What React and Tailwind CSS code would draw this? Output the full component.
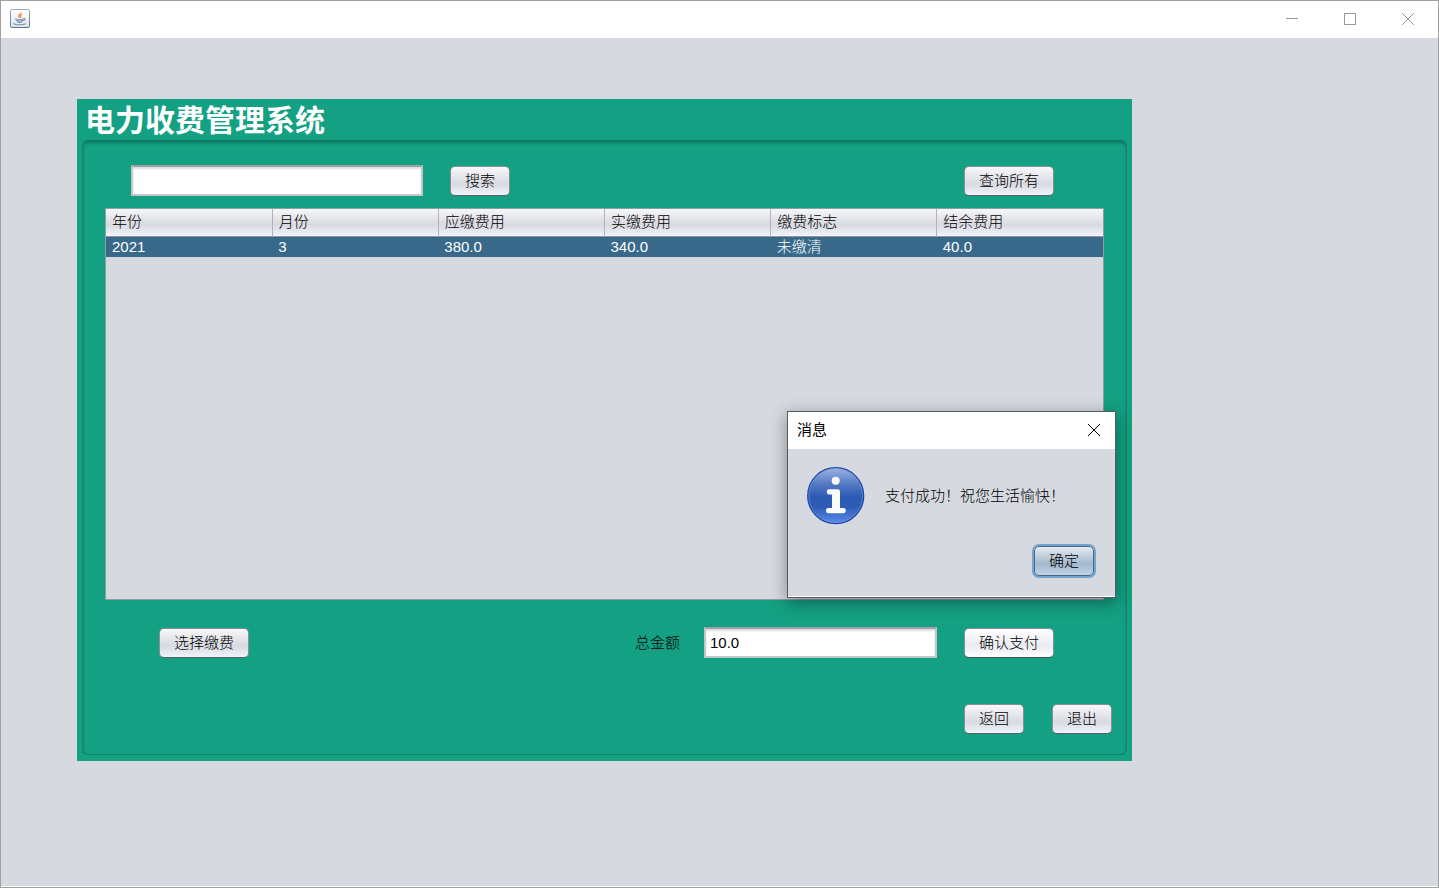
import React, { useState } from 'react';

const COLUMNS = ['年份', '月份', '应缴费用', '实缴费用', '缴费标志', '结余费用'];

const BILLS = [
    { id: 1, cells: ['2021', '3', '380.0', '340.0', '未缴清', '40.0'] },
];

const FONT = "font-['Liberation_Sans','Noto_Sans_CJK_SC',sans-serif]";

const BUTTON_STYLES = {
    normal: 'border-[#8b8f95] border-b-[#5c6066] bg-linear-to-b from-[#f8f8fa] via-[#d8dae1] via-60% to-[#f0f3fb]',
    bright: 'border-[#8b8f95] border-b-[#4a4e54] bg-linear-to-b from-white via-[#e9ebf1] via-60% to-white',
    focused: 'border-[#4a6784] bg-linear-to-b from-[#e6ebf0] via-[#a3b8cc] via-60% to-[#c0d4e8] shadow-[0_0_0_2px_#73a4d1]',
};

function NimbusButton({ children, variant = 'normal', className = '', onClick }) {
    return (
        <button
            type="button"
            onClick={onClick}
            className={`h-[30px] shrink-0 rounded-[5px] border text-center text-[15px] leading-5 font-light text-black ${BUTTON_STYLES[variant]} ${className}`}
        >
            {children}
        </button>
    );
}

function NimbusInput({ className = '', ...props }) {
    return (
        <input
            type="text"
            className={`h-[31px] border-2 border-[#c2c5ca] border-t-[#9da0a5] bg-white px-1 text-[15px] text-black shadow-[inset_0_2px_2px_#dddddd] outline-none ${className}`}
            {...props}
        />
    );
}

function JavaIcon() {
    return (
        <svg width="20" height="20" viewBox="0 0 20 20" aria-hidden="true">
            <defs>
                <linearGradient id="javaTile" x1="0" y1="0" x2="0" y2="1">
                    <stop offset="0" stopColor="#ffffff" />
                    <stop offset="1" stopColor="#dfe3e7" />
                </linearGradient>
                <linearGradient id="javaBorder" x1="0" y1="0" x2="0" y2="1">
                    <stop offset="0" stopColor="#9aa9b7" />
                    <stop offset="1" stopColor="#587894" />
                </linearGradient>
            </defs>
            <rect x="0.5" y="0.5" width="19" height="18" rx="1.5" fill="url(#javaTile)" stroke="url(#javaBorder)" />
            <path d="M10.800 3.500c.700 1.600-2.600 2.300-2.200 3.800.2.700.9 1 1 1.700M12 5.500c-2 .9-2.200 1.300-1.300 2.200.3.400.1.800-.3 1.100" fill="none" stroke="#ec914e" strokeWidth="1.300" />
            <path d="M5 9.800c2 .9 6.500.9 8.800 0M6 11.300c2 .8 5 .8 7 0M7 12.800c1.600.7 3.800.7 5.300 0M13.500 9.500c2.200-.4 2 1.800-.5 2.200M4.500 14c-1.800.8 1 1.700 5 1.700s6.800-.7 5.800-1.500" fill="none" stroke="#7893ac" strokeWidth="1.100" />
        </svg>
    );
}

function InfoIcon() {
    return (
        <svg width="58" height="58" viewBox="0 0 58 58" className="shrink-0" aria-hidden="true">
            <defs>
                <linearGradient id="infoFill" x1="0" y1="0" x2="0" y2="1">
                    <stop offset="0" stopColor="#9db4e4" />
                    <stop offset="0.3" stopColor="#5279c2" />
                    <stop offset="0.52" stopColor="#2d5bb4" />
                    <stop offset="0.7" stopColor="#2d5bb4" />
                    <stop offset="1" stopColor="#5b8bec" />
                </linearGradient>
            </defs>
            <circle cx="28.700" cy="28.700" r="28" fill="url(#infoFill)" stroke="#2148a0" strokeWidth="1.200" />
            <circle cx="28.700" cy="28.700" r="26.800" fill="none" stroke="#7d9fe3" strokeOpacity="0.45" />
            <circle cx="28.700" cy="13.800" r="4" fill="#fafafa" />
            <path d="M22 22.200h8.500c1.700 0 2.500.8 2.500 2.500V41h3.500c1.500 0 2.300 1.100 2.300 2.600s-.8 2.700-2.300 2.700H21.300c-1.500 0-2.300-1.200-2.300-2.700s.8-2.600 2.300-2.600H25V27.400h-3c-1.400 0-2.200-1.200-2.200-2.600s.8-2.600 2.200-2.600z" fill="#fafafa" />
        </svg>
    );
}

function TitleBar() {
    return (
        <header className="flex h-[37px] shrink-0 items-center justify-between bg-white pr-6 pb-px pl-[9px]">
            <JavaIcon />
            <div className="flex items-center gap-[46px] text-[#999999]">
                <button type="button" aria-label="最小化">
                    <svg width="12" height="12" viewBox="0 0 12 12" className="block">
                        <path d="M0 5.5h12" stroke="currentColor" />
                    </svg>
                </button>
                <button type="button" aria-label="最大化">
                    <svg width="12" height="12" viewBox="0 0 12 12" className="block">
                        <rect x="0.5" y="0.5" width="11" height="11" fill="none" stroke="currentColor" />
                    </svg>
                </button>
                <button type="button" aria-label="关闭">
                    <svg width="12" height="12" viewBox="0 0 12 12" className="block">
                        <path d="M0 0l12 12M12 0L0 12" stroke="currentColor" />
                    </svg>
                </button>
            </div>
        </header>
    );
}

function BillTable() {
    return (
        <div className="mx-[22px] mt-3 min-h-[392px] border border-[#8f9ea3] bg-[#d6d9e0]">
            <table className="w-full table-fixed border-collapse text-left text-[15px] leading-5">
                <thead>
                    <tr className="h-[27px] border-b border-[#8f9399] bg-linear-to-b from-[#f7f7f9] via-[#d8dae1] via-60% to-[#eef1f9]">
                        {COLUMNS.map(name => (
                            <th key={name} scope="col" className="border-r border-[#b0b3b9] px-1.5 py-0 font-light text-black last:border-r-0">
                                {name}
                            </th>
                        ))}
                    </tr>
                </thead>
                <tbody>
                    {BILLS.map(bill => (
                        <tr key={bill.id} className="h-5 bg-[#39698a] font-light text-white">
                            {bill.cells.map((cell, i) => (
                                <td key={COLUMNS[i]} className="px-1.5 py-0">{cell}</td>
                            ))}
                        </tr>
                    ))}
                </tbody>
            </table>
        </div>
    );
}

function MessageDialog({ onClose }) {
    return (
        <div
            role="dialog"
            aria-labelledby="dialog-title"
            className="absolute top-[312px] right-4 w-[329px] border border-[#565b60] bg-[#d6d9e0] shadow-[0_4px_16px_rgba(0,0,0,0.4)]"
        >
            <div className="flex h-[37px] items-center justify-between bg-white pr-[14px] pb-px pl-[9px]">
                <h2 id="dialog-title" className="text-[15px] leading-5 text-black">消息</h2>
                <button type="button" aria-label="关闭" onClick={onClose}>
                    <svg width="14" height="14" viewBox="0 0 14 14" className="block">
                        <path d="M1 1l12 12M13 1L1 13" stroke="#000" />
                    </svg>
                </button>
            </div>
            <div className="flex items-center gap-5 px-[19px] pt-[18px]">
                <InfoIcon />
                <p className="text-[15px] leading-5 font-light text-black">支付成功！祝您生活愉快！</p>
            </div>
            <div className="flex justify-end border-b border-white px-[21px] pt-[21px] pb-5">
                <NimbusButton variant="focused" className="w-[60px]" onClick={onClose}>确定</NimbusButton>
            </div>
        </div>
    );
}

function App() {
    const [keyword, setKeyword] = useState('');
    const [amount, setAmount] = useState('10.0');
    const [showMessage, setShowMessage] = useState(true);

    return (
        <div className={`flex min-h-screen flex-col border border-[#a0a0a0] bg-[#d6d9e0] ${FONT}`}>
            <TitleBar />

            <main className="grow border-b border-white pt-[61px] pr-[306px] pl-[76px]">
                <section className="relative flex flex-col bg-[#14a082] px-[5px] pb-1.5">
                    <h1 className="pt-0.5 pl-[3px] text-[30px] leading-[39px] font-bold text-white">电力收费管理系统</h1>

                    <div className="rounded-md border border-[#108369] border-t-[#0f7860] pt-6 pb-5 shadow-[inset_0_2px_3px_rgba(0,0,0,0.25)]">
                        <div className="flex items-center pr-[72px] pl-12">
                            <NimbusInput
                                aria-label="搜索内容"
                                value={keyword}
                                onChange={e => setKeyword(e.target.value)}
                                className="w-[292px]"
                            />
                            <NimbusButton className="ml-[27px] w-[60px]">搜索</NimbusButton>
                            <NimbusButton className="ml-auto w-[90px]">查询所有</NimbusButton>
                        </div>

                        <BillTable />

                        <div className="mt-[27px] flex items-center pr-[72px] pl-[76px]">
                            <NimbusButton className="w-[90px]">选择缴费</NimbusButton>
                            <label htmlFor="amount" className="ml-auto text-[15px] leading-5 font-light text-black">总金额</label>
                            <NimbusInput
                                id="amount"
                                value={amount}
                                onChange={e => setAmount(e.target.value)}
                                className="ml-6 w-[233px]"
                            />
                            <NimbusButton variant="bright" className="ml-[27px] w-[90px]" onClick={() => setShowMessage(true)}>
                                确认支付
                            </NimbusButton>
                        </div>

                        <div className="mt-[46px] flex justify-end gap-7 pr-[14px]">
                            <NimbusButton className="w-[60px]">返回</NimbusButton>
                            <NimbusButton className="w-[60px]">退出</NimbusButton>
                        </div>
                    </div>

                    {showMessage && <MessageDialog onClose={() => setShowMessage(false)} />}
                </section>
            </main>
        </div>
    );
}

export default App;
